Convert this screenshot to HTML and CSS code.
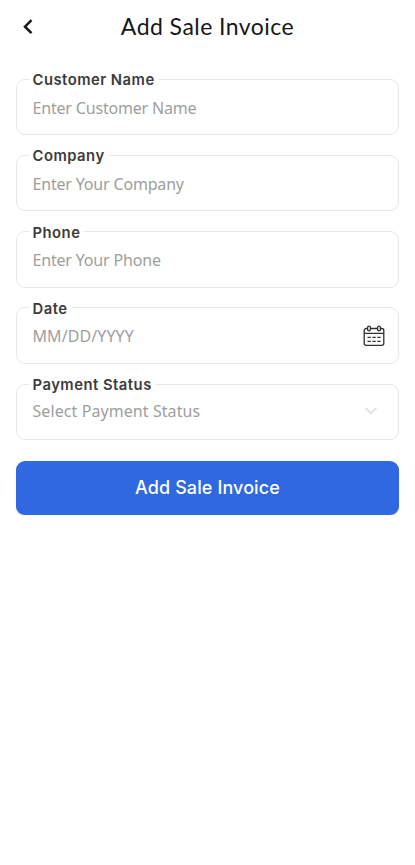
FILE: index.html
```html
<!DOCTYPE html>
<html lang="en">
<head>
<meta charset="utf-8">
<title>Add Sale Invoice</title>
<link rel="stylesheet" href="styles.css">
</head>
<body>
<header class="bar">
  <svg class="back" width="12" height="18" viewBox="0 0 12 18"><path d="M9.500 2.200 3 8.700l6.500 6.500" fill="none" stroke="#171717" stroke-width="2.500"/></svg>
  <h1 class="title">Add Sale Invoice</h1>
</header>
<form class="form">
  <fieldset class="field"><legend class="label">Customer Name</legend><div class="row"><span class="hint">Enter Customer Name</span></div></fieldset>
  <fieldset class="field"><legend class="label">Company</legend><div class="row"><span class="hint">Enter Your Company</span></div></fieldset>
  <fieldset class="field"><legend class="label">Phone</legend><div class="row"><span class="hint">Enter Your Phone</span></div></fieldset>
  <fieldset class="field"><legend class="label">Date</legend><div class="row"><span class="hint hint-wide">MM/DD/YYYY</span>
    <svg class="calendar" width="22" height="22" viewBox="0 0 22 22" fill="none" stroke="#303030" stroke-width="1.300">
      <path d="M4.500 3.500H3.200a2 2 0 0 0-2 2v12.800a2 2 0 0 0 2 2h15.600a2 2 0 0 0 2-2V5.500a2 2 0 0 0-2-2h-1.300M7.500 3.500h7M1.200 8.300h19.600"/>
      <rect x="4.600" y="1.200" width="2.800" height="4.600" rx="1.400"/><rect x="14.600" y="1.200" width="2.800" height="4.600" rx="1.400"/>
      <path d="M4.500 12.300h3.300M9.400 12.300h3.300M14.300 12.300h3.300M4.500 16.300h3.300M9.400 16.300h3.300M14.300 16.300h3.300"/>
    </svg></div></fieldset>
  <fieldset class="field"><legend class="label">Payment Status</legend><div class="row row-select"><span class="hint hint-wide">Select Payment Status</span>
    <svg class="chevron" width="14" height="10" viewBox="0 0 14 10"><path d="m1.700 2 5.300 5.300L12.300 2" fill="none" stroke="#e2e3e5" stroke-width="2.200"/></svg></div></fieldset>
  <button class="submit" type="button"><span class="submit-text">Add Sale Invoice</span></button>
</form>
</body>
</html>
```
FILE: styles.css
```css
* { box-sizing: border-box; }
body { margin: 0; background: #fff; font-family: Lato, sans-serif; }
.bar { display: grid; grid-template-columns: 24px 1fr 24px; align-items: center; height: 54px; padding: 0 20px; }
.back { display: block; margin-left: 2px; }
.title { margin: -2px 0 0; text-align: center; font-size: 23px; line-height: 30px; font-weight: 400; color: #171717; letter-spacing: .45px; white-space: nowrap; }
.form { display: flex; flex-direction: column; padding: 15px 16px 0; }
.field { min-width: 0; height: 66px; margin: 0 0 10.33px; padding: 0 11.5px; border: 1px solid #e6e7e9; border-radius: 9px; }
.label { height: 20px; padding: 1px 4px 0; font-family: Inter, sans-serif; font-size: 14.8px; line-height: 20px; font-weight: 600; color: #3b3b3b; letter-spacing: .5px; white-space: nowrap; }
.row { display: flex; align-items: center; justify-content: space-between; height: 37px; padding: 0 1.500px 0 4px; }
.row-select { height: 33px; padding-right: 9px; }
.hint { font-family: "Noto Sans", sans-serif; font-size: 16px; line-height: 22px; color: #9e9e9e; letter-spacing: -.18px; white-space: nowrap; }
.hint-wide { letter-spacing: .08px; }
.submit { height: 54px; margin-top: 10px; padding: 0; border: 0; border-radius: 9px; background: #2f68e1; box-shadow: 0 1px 1px #b8c4df; color: #fff; font-family: Inter, sans-serif; font-size: 18px; font-weight: 500; }
.submit-text { letter-spacing: .1px; }
```
